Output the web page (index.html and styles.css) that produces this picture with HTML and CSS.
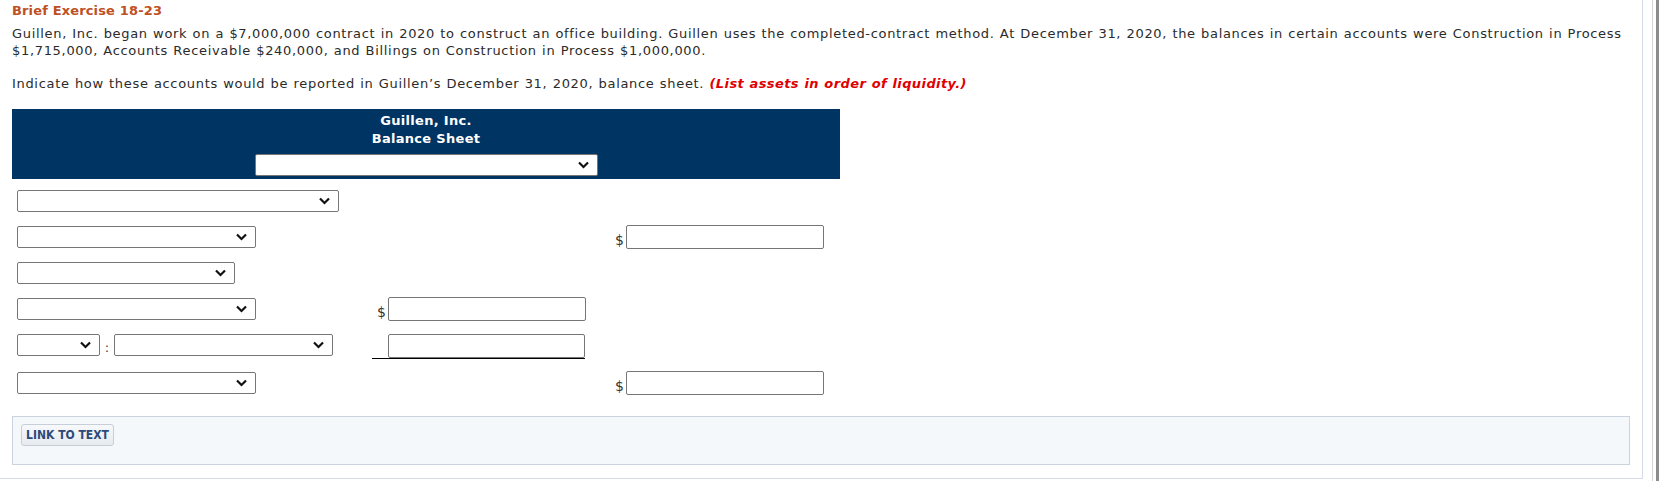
FILE: index.html
```html
<!DOCTYPE html>
<html lang="en">
<head>
<meta charset="utf-8">
<title>Brief Exercise 18-23</title>
<link rel="stylesheet" href="styles.css">
</head>
<body>
<div class="page">
  <div class="frame">
    <h1 class="title">Brief Exercise 18-23</h1>
    <p class="text">Guillen, Inc. began work on a $7,000,000 contract in 2020 to construct an office building. Guillen uses the completed-contract method. At December 31, 2020, the balances in certain accounts were Construction in Process $1,715,000, Accounts Receivable $240,000, and Billings on Construction in Process $1,000,000.</p>
    <p class="text ask">Indicate how these accounts would be reported in Guillen’s December 31, 2020, balance sheet. <em class="hint">(List assets in order of liquidity.)</em></p>

    <div class="sheet">
      <div class="sheet-head">
        <div class="co">Guillen, Inc.</div>
        <div class="co">Balance Sheet</div>
        <select class="sel sel-head"><option></option></select>
      </div>

      <div class="row">
        <div class="c1"><select class="sel w322"><option></option></select></div>
        <div class="c2"></div>
        <div class="c3"></div>
      </div>
      <div class="row">
        <div class="c1"><select class="sel w239"><option></option></select></div>
        <div class="c2"></div>
        <div class="c3"><span class="cur">$</span><input class="amt" type="text"></div>
      </div>
      <div class="row">
        <div class="c1"><select class="sel w218"><option></option></select></div>
        <div class="c2"></div>
        <div class="c3"></div>
      </div>
      <div class="row">
        <div class="c1"><select class="sel w239"><option></option></select></div>
        <div class="c2"><span class="cur">$</span><input class="amt" type="text"></div>
        <div class="c3"></div>
      </div>
      <div class="row row-tall">
        <div class="c1"><select class="sel w83"><option></option></select><span class="colon">:</span><select class="sel w219"><option></option></select></div>
        <div class="c2 under"><span class="cur blank">$</span><input class="amt" type="text"></div>
        <div class="c3"></div>
      </div>
      <div class="row">
        <div class="c1"><select class="sel w239"><option></option></select></div>
        <div class="c2"></div>
        <div class="c3"><span class="cur">$</span><input class="amt" type="text"></div>
      </div>
    </div>

    <div class="links">
      <button class="link-btn" type="button">LINK TO TEXT</button>
    </div>
  </div>
  <div class="edge"></div>
</div>
</body>
</html>
```
FILE: styles.css
```css
html, body {
  margin: 0;
  padding: 0;
  background: #ffffff;
}
body {
  font-family: "DejaVu Sans", Verdana, sans-serif;
  font-size: 13px;
  color: #2b2b2b;
}
.page {
  display: flex;
  height: 481px;
}
.frame {
  width: 1643px;
  height: 479px;
  box-sizing: border-box;
  padding: 2px 0 0 12px;
  border-right: 1px solid #d3dce6;
  border-bottom: 1px solid #d3dce6;
}
.edge {
  margin-left: 9px;
  width: 3px;
  height: 481px;
  border-left: 1px solid #d4d4d4;
  padding-left: 3px;
  background: #8c8c8c;
  background-clip: content-box;
}
.title {
  margin: 0;
  font-size: 13px;
  line-height: 17px;
  font-weight: bold;
  color: #bf501f;
  letter-spacing: 0.15px;
}
.text {
  margin: 6px 0 0 0;
  line-height: 17px;
  width: 1628px;
  letter-spacing: 0.68px;
  word-spacing: 0.5px;
}
.ask {
  margin-top: 16px;
}
.hint {
  color: #e00000;
  font-weight: bold;
  font-style: italic;
  letter-spacing: 0.4px;
}
.sheet {
  margin-top: 17px;
  width: 828px;
}
.sheet-head {
  background: #003462;
  height: 70px;
  box-sizing: border-box;
  padding-top: 3px;
  display: flex;
  flex-direction: column;
  align-items: center;
}
.co {
  color: #ffffff;
  font-weight: bold;
  line-height: 18px;
  letter-spacing: 0.3px;
}
.sel {
  -webkit-appearance: none;
  appearance: none;
  height: 22px;
  box-sizing: border-box;
  border: 1px solid #767676;
  border-radius: 2px;
  background-color: #ffffff;
  background-image: url("data:image/svg+xml;utf8,<svg xmlns='http://www.w3.org/2000/svg' width='11' height='8' viewBox='0 0 11 8'><path d='M1 1.5 L5.5 6 L10 1.5' fill='none' stroke='%23111' stroke-width='2.2'/></svg>");
  background-repeat: no-repeat;
  background-position: right 8px center;
  font-family: "DejaVu Sans", sans-serif;
  font-size: 13px;
  margin: 0;
  padding: 0 24px 0 4px;
}
.sel-head {
  margin-top: 6px;
  width: 343px;
}
.row {
  display: grid;
  grid-template-columns: 355px 238px 230px;
  height: 36px;
  align-items: center;
  padding-left: 5px;
}
.sheet-head + .row {
  margin-top: 4px;
}
.row-tall {
  height: 38px;
  align-items: start;
  padding-top: 7px;
  box-sizing: border-box;
}
.c1 {
  display: flex;
  align-items: flex-end;
}
.c2, .c3 {
  display: flex;
  align-items: flex-end;
  padding-left: 5px;
}
.c2 {
  width: 213px;
}
.under {
  border-bottom: 1px solid #000000;
  height: 25px;
  box-sizing: border-box;
}
.cur {
  width: 11px;
  font-family: "DejaVu Sans", sans-serif;
  font-size: 14px;
  line-height: 17px;
  color: #333;
}
.blank {
  visibility: hidden;
}
.amt {
  width: 198px;
  height: 24px;
  box-sizing: border-box;
  border: 1px solid #767676;
  border-radius: 2px;
  margin: 0;
  padding: 0 3px;
}
.w322 { width: 322px; }
.w239 { width: 239px; }
.w218 { width: 218px; }
.w83 { width: 83px; }
.w219 { width: 219px; }
.colon {
  width: 14px;
  text-align: center;
  line-height: 17px;
  color: #444;
}
.links {
  margin-top: 15px;
  width: 1618px;
  height: 49px;
  box-sizing: border-box;
  background: #f4f8fb;
  border: 1px solid #cbd4de;
  padding: 7px 0 0 8px;
}
.link-btn {
  height: 22px;
  width: 93px;
  padding: 0;
  border: 1px solid #c6ced8;
  border-radius: 3px;
  background: linear-gradient(#f7f9fb, #e6ebf0);
  color: #2d4a78;
  font-family: "Liberation Sans Narrow", "DejaVu Sans Condensed", "Liberation Sans", sans-serif;
  font-stretch: condensed;
  font-weight: bold;
  font-size: 12px;
}
```
